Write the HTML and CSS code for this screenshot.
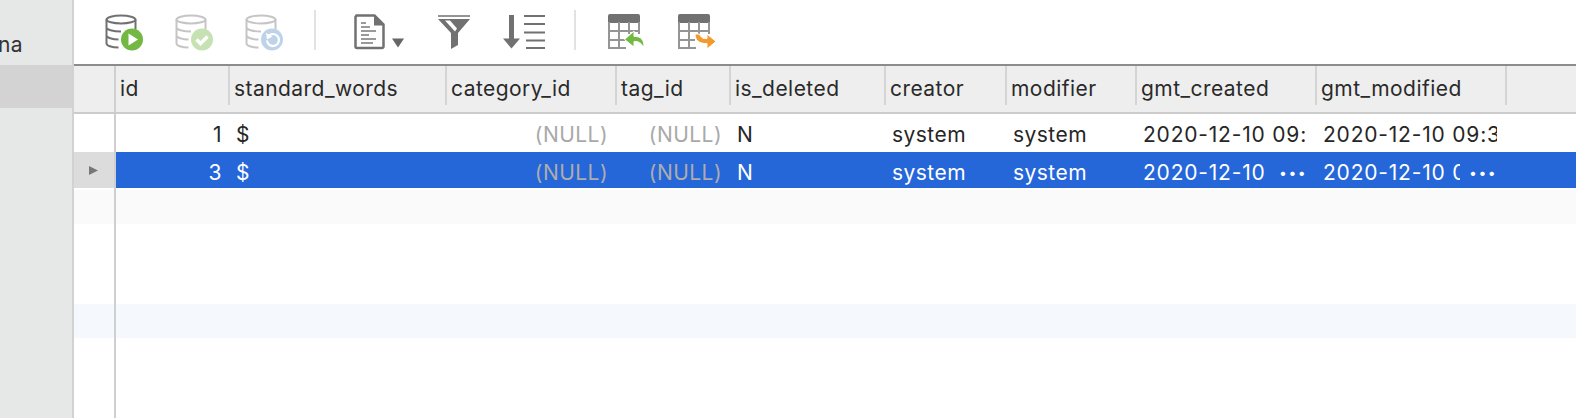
FILE: index.html
```html
<!DOCTYPE html>
<html lang="en">
<head>
<meta charset="utf-8">
<title>Table data</title>
<link rel="stylesheet" href="styles.css">
</head>
<body>
<div class="app">
  <aside class="side">
    <div class="side-top"><span class="side-label">na</span></div>
    <div class="side-sel"></div>
  </aside>
  <main class="main">
    <div class="toolbar">
      <svg class="ico db-a" viewBox="0 0 36 36"><use href="#db"/><circle cx="27" cy="25.500" r="11" fill="#72b843"/><path d="M23.500 19.500v12l9.500-6z" fill="#fff"/></svg>
      <svg class="ico db-b dim" viewBox="0 0 36 36"><use href="#db"/><circle cx="27" cy="25.500" r="11" fill="#72b843"/><path d="M21.500 25.500l4 4 7-7" fill="none" stroke="#fff" stroke-width="3.500"/></svg>
      <svg class="ico db-c dim" viewBox="0 0 36 36"><use href="#db"/><circle cx="27" cy="25.500" r="11" fill="#5f94cb"/><path d="M23.500 22a6 6 0 1 1-1.500 4.500" fill="none" stroke="#fff" stroke-width="2.200"/><path d="M21 19l1 6.500 5.500-3z" fill="#fff"/></svg>
      <i class="tsep sep-a"></i>
      <svg class="ico doc" viewBox="0 0 50 36"><path d="M2.500 1.500h18l9 9v22a1.500 1.500 0 0 1-1.500 1.500H3a1.500 1.500 0 0 1-1.500-1.500V3z" fill="#fff" stroke="#717171" stroke-width="2.500"/><path d="M20 1.500v10h9.500z" fill="#717171"/><path d="M7 9h5M7 13h9M7 17h15M7 21h8M7 25h15M7 29h12" stroke="#9a9a9a" stroke-width="1.800"/><path d="M38 24.500h12l-6 9z" fill="#666"/></svg>
      <svg class="ico funnel" viewBox="0 0 34 36"><path d="M1 2h32" stroke="#717171" stroke-width="1.500"/><path d="M1 5h32L21 19v12l-7 4V19z" fill="#717171"/><path d="M8 6.500h5l7 8-2 3z" fill="#fff"/></svg>
      <svg class="ico sort" viewBox="0 0 42 36"><path d="M8.500 1v26" stroke="#717171" stroke-width="5"/><path d="M0 24.500h17l-8.500 10z" fill="#717171"/><path d="M21 2h21M21 10h21M21 18.500h21M23 26.500h19M23 34h19" stroke="#717171" stroke-width="2"/></svg>
      <i class="tsep sep-b"></i>
      <svg class="ico tbl-a" viewBox="0 0 38 36"><use href="#grid"/><path d="M36 33c0-7-3-11-10-10.500V17l-9.500 8.500 9.500 7.500v-5.500c5-.500 7 2 10 5.500z" fill="#72b843" stroke="#fff" stroke-width="1"/></svg>
      <svg class="ico tbl-b" viewBox="0 0 38 36"><use href="#grid"/><path d="M17 20c0 6 4 10 12 9.500V35l9-7.500-9-7.500v4.500c-4 .500-6-1-7.500-4.500z" fill="#f29a2e" stroke="#fff" stroke-width="1"/></svg>
    </div>
    <div class="grid">
      <div class="row head">
        <div class="gut"></div>
        <div class="hc w-id">id</div>
        <div class="hc w-words">standard_words</div>
        <div class="hc w-cat">category_id</div>
        <div class="hc w-tag">tag_id</div>
        <div class="hc w-del">is_deleted</div>
        <div class="hc w-cre">creator</div>
        <div class="hc w-mod">modifier</div>
        <div class="hc w-gc">gmt_created</div>
        <div class="hc w-gm">gmt_modified</div>
      </div>
      <div class="row data r1">
        <div class="gut"></div>
        <div class="c w-id num">1</div>
        <div class="c w-words">$</div>
        <div class="c w-cat num null">(NULL)</div>
        <div class="c w-tag num null">(NULL)</div>
        <div class="c w-del">N</div>
        <div class="c w-cre">system</div>
        <div class="c w-mod">system</div>
        <div class="c w-gc"><span class="clip">2020-12-10 09:37:21</span></div>
        <div class="c w-gm"><span class="clip">2020-12-10 09:37:21</span></div>
      </div>
      <div class="row data r2 sel">
        <div class="gut"><svg class="arrow" viewBox="0 0 9 9"><path d="M0 0l9 4.500-9 4.500z"/></svg></div>
        <div class="c w-id num">3</div>
        <div class="c w-words">$</div>
        <div class="c w-cat num null">(NULL)</div>
        <div class="c w-tag num null">(NULL)</div>
        <div class="c w-del">N</div>
        <div class="c w-cre">system</div>
        <div class="c w-mod">system</div>
        <div class="c w-gc"><span class="clip short-a">2020-12-10 09:37:21</span><span class="dots">•••</span></div>
        <div class="c w-gm"><span class="clip short-b">2020-12-10 09:37:21</span><span class="dots">•••</span></div>
      </div>
      <div class="band b-gap"><div class="gut"></div></div>
      <div class="band b-grey"><div class="gut"></div></div>
      <div class="band b-white-1"><div class="gut"></div></div>
      <div class="band b-blue"><div class="gut"></div></div>
      <div class="band b-white-2"><div class="gut"></div></div>
    </div>
  </main>
</div>
<svg class="defs" aria-hidden="true">
  <defs>
    <g id="db" fill="none" stroke="#717171" stroke-width="2">
      <ellipse cx="16" cy="5.500" rx="14.500" ry="4"/>
      <path d="M1.500 5.500v24c0 2 5 4 12 4M30.500 5.500v10M1.500 13.500c0 2 6 4 14.500 4M1.500 21.500c0 2 6 4 12 4"/>
    </g>
    <g id="grid">
      <path d="M2 0h28a2 2 0 0 1 2 2v7H0V2a2 2 0 0 1 2-2z" fill="#717171"/>
      <path d="M1 8v26h17M31 8v12M11 8v26M21 8v12M1 17h30M1 26h16" fill="none" stroke="#959595" stroke-width="2"/>
    </g>
  </defs>
</svg>
</body>
</html>
```
FILE: styles.css
```css
* { box-sizing: border-box; }
html, body { margin: 0; height: 100%; background: #fff; overflow: hidden; }
body { font-family: Inter, "Liberation Sans", sans-serif; font-size: 21px; letter-spacing: .45px; color: #262626; }
.app { display: flex; width: 1576px; height: 418px; }
.defs { width: 0; height: 0; position: absolute; }

.side { width: 74px; flex: none; background: #e6e7e7; border-right: 2px solid #d2d2d2; }
.side-top { height: 65px; position: relative; overflow: hidden; }
.side-label { display: block; padding: 33px 0 0 0; margin-left: -2px; line-height: 24px; color: #333; }
.side-sel { height: 43px; background: #d3d3d3; }

.main { flex: 1; display: flex; flex-direction: column; min-width: 0; }
.toolbar { height: 66px; flex: none; display: flex; align-items: flex-start; padding: 14px 0 0 31px; border-bottom: 2px solid #8c8c8c; }
.ico { display: block; height: 36px; flex: none; overflow: visible; }
.dim { opacity: .4; }
.db-a { width: 36px; }
.db-b { width: 36px; margin-left: 34px; }
.db-c { width: 36px; margin-left: 34px; }
.tsep { width: 2px; height: 40px; margin: -4px 0 0 33px; background: #e2e2e2; flex: none; }
.doc { width: 50px; margin-left: 38px; }
.funnel { width: 34px; margin-left: 33px; }
.sort { width: 42px; margin-left: 32px; }
.sep-b { margin-left: 29px; }
.tbl-a { width: 38px; margin-left: 32px; }
.tbl-b { width: 38px; margin-left: 32px; }

.grid { flex: 1; display: flex; flex-direction: column; min-height: 0; }
.row { display: flex; flex: none; }
.gut { width: 42px; flex: none; border-right: 2px solid #cfcfcf; display: flex; align-items: center; justify-content: center; padding-right: 2px; }
.head { height: 48px; background: #eeeeee; border-bottom: 2px solid #cccccc; }
.hc { padding: 8px 0 0 4px; line-height: 30px; border-right: 2px solid #d4d4d4; margin-bottom: 7px; white-space: nowrap; color: #2a2a2a; }
.w-id { width: 114px; }
.w-words { width: 217px; }
.w-cat { width: 170px; }
.w-tag { width: 114px; }
.w-del { width: 155px; }
.w-cre { width: 121px; }
.w-mod { width: 130px; }
.w-gc { width: 180px; }
.w-gm { width: 190px; }

.data { height: 37px; }
.r1 { height: 38px; }
.c { padding: 3px 8px 0 6px; line-height: 36px; white-space: nowrap; overflow: hidden; display: flex; }
.num { justify-content: flex-end; }
.w-id.num { padding-right: 8px; }
.null { color: #a9a9a9; padding-right: 9px; }
.clip { display: block; overflow: hidden; width: 162px; flex: none; letter-spacing: .8px; }
.w-gm .clip { width: 174px; }
.short-a { width: 122px; }
.w-gm .short-b { width: 137px; }
.dots { font-size: 14px; letter-spacing: 1.500px; margin-left: 14px; }
.w-gm .dots { margin-left: 9px; }
.sel { color: #fff; height: 36px; background: #2566d9; }
.sel .c { background: #2566d9; }
.sel .null { color: #adadad; }
.sel .gut { background: #dcdcdc; }
.arrow { width: 9px; height: 9px; fill: #777; }

.band { flex: none; display: flex; }
.band .gut { height: 100%; }
.b-gap { height: 2px; background: #fff; }
.b-grey { height: 34px; background: #fafafa; }
.b-white-1 { height: 80px; background: #fff; }
.b-blue { height: 34px; background: #f5f8fd; }
.b-white-2 { flex: 1; background: #fff; }
```
